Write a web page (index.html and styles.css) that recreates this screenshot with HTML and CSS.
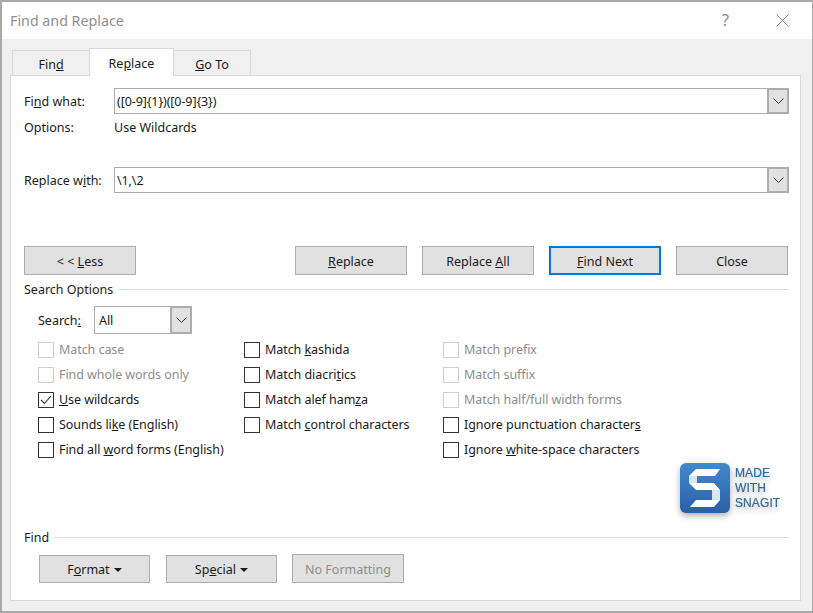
FILE: index.html
```html
<!DOCTYPE html>
<html lang="en">
<head>
<meta charset="utf-8">
<title>Find and Replace</title>
<link rel="stylesheet" href="styles.css">
</head>
<body>
<div class="window">
  <header class="titlebar">
    <span class="title">Find and Replace</span>
    <span class="help">?</span>
    <svg class="close-x" width="13" height="13" viewBox="0 0 13 13"><path d="M.5.5l12 12M12.500.5l-12 12" stroke="#8a8a8a" fill="none"/></svg>
  </header>
  <div class="body">
    <div class="tabs">
      <div class="tab tab-find">Fin<u>d</u></div>
      <div class="tab tab-active">Re<u>p</u>lace</div>
      <div class="tab tab-goto"><u>G</u>o To</div>
    </div>
    <main class="panel">
      <div class="field field-find">
        <label class="field-label">Fi<u>n</u>d what:</label>
        <div class="combo"><span class="combo-text">([0-9]{1})([0-9]{3})</span>
          <span class="combo-btn"><svg width="11" height="6" viewBox="0 0 11 6"><path d="M.5.5l5 5 5-5" stroke="#333" fill="none"/></svg></span></div>
      </div>
      <div class="options-row"><span class="field-label">Options:</span><span>Use Wildcards</span></div>
      <div class="field field-replace">
        <label class="field-label">Replace w<u>i</u>th:</label>
        <div class="combo"><span class="combo-text">\1,\2</span>
          <span class="combo-btn"><svg width="11" height="6" viewBox="0 0 11 6"><path d="M.5.5l5 5 5-5" stroke="#333" fill="none"/></svg></span></div>
      </div>
      <div class="actions">
        <button class="btn">&lt; &lt; <u>L</u>ess</button>
        <span class="spacer"></span>
        <button class="btn"><u>R</u>eplace</button>
        <button class="btn">Replace <u>A</u>ll</button>
        <button class="btn btn-default"><u>F</u>ind Next</button>
        <button class="btn">Close</button>
      </div>
      <div class="legend legend-search"><span>Search Options</span><i></i></div>
      <div class="search-row">
        <label>Search<u>:</u></label>
        <div class="combo combo-small"><span class="combo-text">All</span>
          <span class="combo-btn"><svg width="11" height="6" viewBox="0 0 11 6"><path d="M.5.5l5 5 5-5" stroke="#333" fill="none"/></svg></span></div>
      </div>
      <div class="checks">
        <div class="check off"><b class="box"></b>Match case</div>
        <div class="check"><b class="box"></b><span>Match <u>k</u>ashida</span></div>
        <div class="check off"><b class="box"></b>Match prefix</div>
        <div class="check off"><b class="box"></b>Find whole words only</div>
        <div class="check"><b class="box"></b><span>Match diacri<u>t</u>ics</span></div>
        <div class="check off"><b class="box"></b>Match suffix</div>
        <div class="check"><b class="box"><svg width="14" height="14" viewBox="0 0 14 14"><path d="M2 7l3.500 3.500L12 3" stroke="#333" stroke-width="1.100" fill="none"/></svg></b><span><u>U</u>se wildcards</span></div>
        <div class="check"><b class="box"></b><span>Match alef ham<u>z</u>a</span></div>
        <div class="check off"><b class="box"></b>Match half/full width forms</div>
        <div class="check"><b class="box"></b><span>Sounds li<u>k</u>e (English)</span></div>
        <div class="check"><b class="box"></b><span>Match <u>c</u>ontrol characters</span></div>
        <div class="check"><b class="box"></b><span>Ignore punctuation character<u>s</u></span></div>
        <div class="check"><b class="box"></b><span>Find all <u>w</u>ord forms (English)</span></div>
        <div></div>
        <div class="check"><b class="box"></b><span>Ignore <u>w</u>hite-space characters</span></div>
      </div>
      <div class="legend legend-find"><span>Find</span><i></i></div>
      <div class="bottom-row">
        <button class="btn btn-small">F<u>o</u>rmat <em class="caret"></em></button>
        <button class="btn btn-small">Sp<u>e</u>cial <em class="caret"></em></button>
        <button class="btn btn-small btn-disabled">No Formatting</button>
      </div>
      <div class="snagit">
        <svg width="50" height="50" viewBox="0 0 50 50">
          <defs><linearGradient id="sg" x1="0" y1="0" x2="0" y2="1"><stop offset="0" stop-color="#4389cc"/><stop offset="1" stop-color="#2a5fa8"/></linearGradient></defs>
          <rect width="50" height="50" rx="6" fill="url(#sg)"/>
          <path d="M16 6H40L35 13H9Z" fill="#fff"/>
          <path d="M9 13H17V20H9Z" fill="#d9e6f2"/>
          <path d="M9 20H34L40 27H16Z" fill="#fff"/>
          <path d="M32 27H40V37H32Z" fill="#d9e6f2"/>
          <path d="M16 37H40L34 44H10Z" fill="#fff"/>
        </svg>
        <div class="snagit-text"><div>MADE</div><div>WITH</div><div>SNAGIT</div></div>
      </div>
    </main>
  </div>
</div>
</body>
</html>
```

FILE: styles.css
```css
* { box-sizing: border-box; }
html, body { margin: 0; padding: 0; background: #fff; }
body { font-family: "Noto Sans", "Open Sans", sans-serif; font-size: 12.5px; color: #1a1a1a; width: 813px; height: 613px; overflow: hidden; }
u { text-underline-offset: 1px; }
.window { width: 813px; height: 613px; border: 1px solid #a9a9a9; border-top-width: 2px; border-bottom-width: 2px; border-left-width: 2px; display: flex; flex-direction: column; }
.titlebar { height: 37px; background: #fff; display: flex; align-items: center; padding: 0 22px 1px 8px; flex: none; }
.title { font-size: 14.250px; color: #8f8f8f; flex: 1; }
.help { font-size: 16px; color: #8a8a8a; margin-right: 47px; }
.close-x { margin-right: 1px; margin-top: 1px; }
.body { flex: 1; background: #f0f0f0; padding: 9px 11px 10px 8px; display: flex; flex-direction: column; }
.tabs { display: flex; height: 27px; padding-left: 2px; flex: none; align-items: flex-end; position: relative; z-index: 1; }
.tab { height: 25px; border: 1px solid #d9d9d9; border-bottom: 0; display: flex; align-items: center; justify-content: center; padding-top: 3px; }
.tab-find { width: 77px; border-right: 0; }
.tab-goto { width: 77px; border-left: 0; }
.tab-active { width: 85px; height: 28px; background: #fff; padding-top: 2px; margin-bottom: -1px; }
.panel { flex: 1; background: #fff; border: 1px solid #d9d9d9; padding: 12px 11px 0 13px; position: relative; }
.field { display: flex; align-items: center; height: 26px; }
.field-label { width: 90px; flex: none; }
.combo { flex: 1; height: 26px; border: 1px solid #adadad; display: flex; align-items: center; position: relative; background: #fff; }
.combo-text { flex: 1; padding-left: 2px; letter-spacing: -.1px; }
.combo-btn { width: 22px; height: 26px; margin: -1px -1px -1px 0; background: #e1e1e1; border: 2px solid #adadad; display: flex; align-items: center; justify-content: center; flex: none; }
.options-row { display: flex; height: 26px; align-items: center; }
.field-replace { margin-top: 27px; }
.actions { display: flex; gap: 15px; margin-top: 53px; padding-right: 1px; }
.spacer { flex: 1; }
.btn { width: 112px; height: 29px; background: #e1e1e1; border: 1px solid #adadad; font: inherit; color: inherit; padding: 2px 0 0; display: block; }
.btn-default { border: 2px solid #0078d7; }
.legend { display: flex; align-items: center; gap: 5px; }
.legend i { flex: 1; height: 1px; background: #dcdcdc; }
.legend-search { margin-top: 5px; height: 18px; }
.search-row { display: flex; align-items: center; margin-top: 8px; padding-left: 14px; height: 28px; }
.search-row label { width: 56px; flex: none; }
.combo-small { flex: none; width: 98px; height: 28px; }
.combo-small .combo-text { padding-left: 4px; }
.combo-small .combo-btn { height: 28px; }
.checks { display: grid; grid-template-columns: 206px 199px 1fr; grid-auto-rows: 25px; margin-top: 3px; padding-left: 14px; }
.check { display: flex; align-items: center; gap: 5px; white-space: nowrap; letter-spacing: -.06px; }
.box { width: 16px; height: 16px; border: 1px solid #333; flex: none; display: flex; align-items: center; justify-content: center; background: #fff; }
.off { color: #8d8d8d; }
.off .box { border-color: #cfcfcf; }
.legend-find { position: absolute; left: 13px; right: 11px; top: 452px; height: 18px; }
.bottom-row { position: absolute; left: 28px; top: 479px; display: flex; gap: 16px; }
.btn-small { width: 111px; height: 28px; padding-top: 0; }
.btn-disabled { width: 112px; margin-top: -1px; height: 29px; color: #8d8d8d; margin-left: -1px; padding-top: 2px; }
.caret { display: inline-block; width: 0; height: 0; border: 4px solid transparent; border-top: 4px solid #1a1a1a; border-bottom: 0; vertical-align: 2px; margin-left: 1px; }
.snagit { position: absolute; left: 669px; top: 387px; display: flex; gap: 5px; align-items: flex-start; filter: drop-shadow(0 3px 3px rgba(0,0,0,.3)); }
.snagit-text { font-family: "Liberation Sans", sans-serif; font-size: 12px; line-height: 15px; color: #2f6a9b; margin-top: 3px; letter-spacing: .1px; -webkit-text-stroke: .2px #2f6a9b; }
```
